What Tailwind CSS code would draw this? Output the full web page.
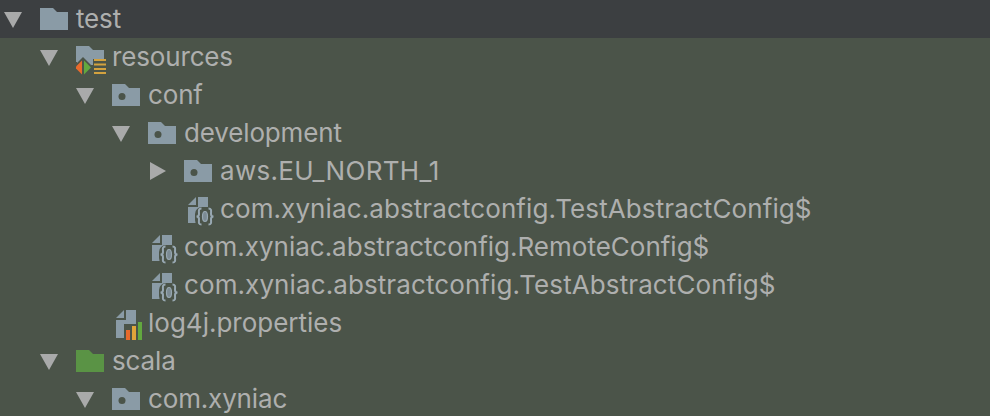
<!DOCTYPE html>
<html lang="en">
<head>
    <meta charset="UTF-8">
    <title>Project tree</title>
    <script src="https://cdn.jsdelivr.net/npm/@tailwindcss/browser@4"></script>
</head>
<body class="h-[416px] overflow-hidden bg-[#4b5449] text-[26px] tracking-[-0.15px] leading-[38px] text-[#aeafae] font-['Inter',sans-serif]">
    <!-- shared icons, each drawn in its 36x38 slot -->
    <svg class="hidden">
        <symbol id="down" viewBox="0 0 36 38"><path d="M0 12H18L9 28Z" fill="#a9aaaa"/></symbol>
        <symbol id="right" viewBox="0 0 36 38"><path d="M2 10L18 19L2 28Z" fill="#a9aaaa"/></symbol>
        <symbol id="folder" viewBox="0 0 36 38"><path d="M0 8H13L17 12H28V30H0Z" fill="#8a9ba6"/></symbol>
        <symbol id="package" viewBox="0 0 36 38"><path d="M0 8H13L17 12H28V30H0Z" fill="#8a9ba6"/><circle cx="10" cy="20.500" r="3.500" fill="#4b5449"/></symbol>
        <symbol id="source" viewBox="0 0 36 38"><path d="M0 8H13L17 12H28V30H0Z" fill="#5a9345"/></symbol>
        <symbol id="resources" viewBox="0 0 36 38">
            <path d="M0 8H13L17 12H28V21H17V27H0Z" fill="#8a9ba6"/>
            <path d="M-3 29L7 19L17 29L7 39Z" fill="#4b5449"/>
            <rect x="-3" y="24" width="4" height="6" fill="#4b5449"/>
            <path d="M-1 29.500L6 22.500V36.500Z" fill="#e86a2c"/>
            <path d="M8 22.500L15 29.500L8 36.500Z" fill="#62a83f"/>
            <path d="M18 22H30M18 26.500H30M18 31H30M18 35H30" stroke="#d3a23f" stroke-width="2"/>
        </symbol>
        <symbol id="config" viewBox="0 0 36 38">
            <path d="M4 15L12 7V15Z M14 7H24V33H4V17H14Z" fill="#8a9ba6"/>
            <rect x="11" y="17" width="20" height="20" rx="7" fill="#4b5449"/>
            <path d="M17.500 18.500C14 18.500 15 21 15 24C15 26 14 26.500 12.500 26.500C14 26.500 15 27 15 29C15 32 14 34.500 17.500 34.500M24.500 18.500C28 18.500 27 21 27 24C27 26 28 26.500 29.500 26.500C28 26.500 27 27 27 29C27 32 28 34.500 24.500 34.500" fill="none" stroke="#98a8b2" stroke-width="2"/>
            <ellipse cx="21" cy="26.500" rx="2.500" ry="5" fill="#7c8b93" stroke="#98a8b2" stroke-width="1.200"/>
        </symbol>
        <symbol id="properties" viewBox="0 0 36 38">
            <path d="M4 14L12 6V14Z M14 6H24V34H4V16H14Z" fill="#8a9ba6"/>
            <rect x="12" y="20" width="20" height="18" fill="#4b5449"/>
            <rect x="24.500" y="16" width="7.500" height="22" fill="#4b5449"/>
            <rect x="14" y="26" width="4" height="10" fill="#e86a2c"/>
            <rect x="20" y="22" width="4" height="14" fill="#e0a53a"/>
            <rect x="26" y="18" width="4" height="18" fill="#62a83f"/>
        </symbol>
    </svg>

    <ul>
        <li class="flex h-[38px] items-center bg-[#3c3f41] pl-1">
            <svg class="size-[36px] h-[38px] shrink-0 overflow-visible"><use href="#down"/></svg>
            <svg class="size-[36px] h-[38px] shrink-0 overflow-visible"><use href="#folder"/></svg>
            <span>test</span>
        </li>
        <li class="flex h-[38px] items-center pl-10">
            <svg class="size-[36px] h-[38px] shrink-0 overflow-visible"><use href="#down"/></svg>
            <svg class="size-[36px] h-[38px] shrink-0 overflow-visible"><use href="#resources"/></svg>
            <span>resources</span>
        </li>
        <li class="flex h-[38px] items-center pl-[76px]">
            <svg class="size-[36px] h-[38px] shrink-0 overflow-visible"><use href="#down"/></svg>
            <svg class="size-[36px] h-[38px] shrink-0 overflow-visible"><use href="#package"/></svg>
            <span>conf</span>
        </li>
        <li class="flex h-[38px] items-center pl-[112px]">
            <svg class="size-[36px] h-[38px] shrink-0 overflow-visible"><use href="#down"/></svg>
            <svg class="size-[36px] h-[38px] shrink-0 overflow-visible"><use href="#package"/></svg>
            <span>development</span>
        </li>
        <li class="flex h-[38px] items-center pl-[148px]">
            <svg class="size-[36px] h-[38px] shrink-0 overflow-visible"><use href="#right"/></svg>
            <svg class="size-[36px] h-[38px] shrink-0 overflow-visible"><use href="#package"/></svg>
            <span class="tracking-[0.3px]">aws.EU_NORTH_1</span>
        </li>
        <li class="flex h-[38px] items-center pl-[184px]">
            <svg class="size-[36px] h-[38px] shrink-0 overflow-visible"><use href="#config"/></svg>
            <span class="tracking-[0.1px]">com.xyniac.abstractconfig.TestAbstractConfig$</span>
        </li>
        <li class="flex h-[38px] items-center pl-[148px]">
            <svg class="size-[36px] h-[38px] shrink-0 overflow-visible"><use href="#config"/></svg>
            <span class="tracking-normal">com.xyniac.abstractconfig.RemoteConfig$</span>
        </li>
        <li class="flex h-[38px] items-center pl-[148px]">
            <svg class="size-[36px] h-[38px] shrink-0 overflow-visible"><use href="#config"/></svg>
            <span class="tracking-[0.1px]">com.xyniac.abstractconfig.TestAbstractConfig$</span>
        </li>
        <li class="flex h-[38px] items-center pl-[112px]">
            <svg class="size-[36px] h-[38px] shrink-0 overflow-visible"><use href="#properties"/></svg>
            <span class="tracking-normal">log4j.properties</span>
        </li>
        <li class="flex h-[38px] items-center pl-10">
            <svg class="size-[36px] h-[38px] shrink-0 overflow-visible"><use href="#down"/></svg>
            <svg class="size-[36px] h-[38px] shrink-0 overflow-visible"><use href="#source"/></svg>
            <span>scala</span>
        </li>
        <li class="flex h-[38px] items-center pl-[76px]">
            <svg class="size-[36px] h-[38px] shrink-0 overflow-visible"><use href="#down"/></svg>
            <svg class="size-[36px] h-[38px] shrink-0 overflow-visible"><use href="#package"/></svg>
            <span>com.xyniac</span>
        </li>
    </ul>
</body>
</html>
